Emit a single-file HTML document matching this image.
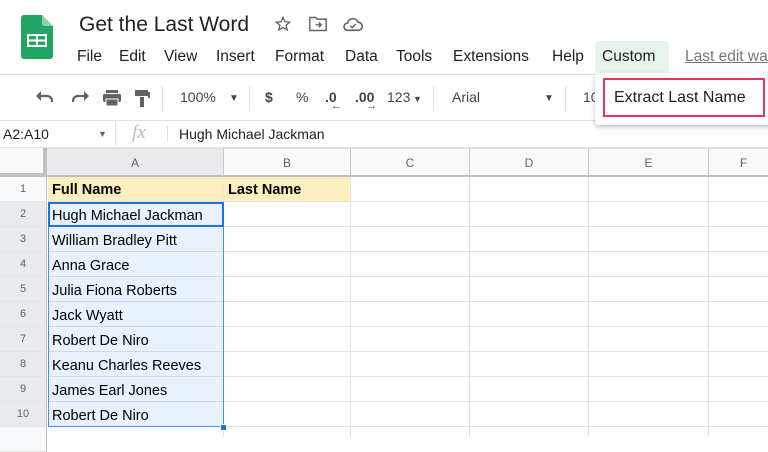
<!DOCTYPE html>
<html><head><meta charset="utf-8"><style>
*{margin:0;padding:0;box-sizing:border-box}
body{width:768px;height:432px;overflow:hidden;background:#fff;font-family:"Liberation Sans",Arial,sans-serif;position:relative;color:#202124}
.a{position:absolute;white-space:nowrap}
.menu{top:48px;font-size:15.5px;color:#202124}
.tb{top:89px;font-size:14px;color:#444}
.cell{position:absolute;font-size:14.5px;color:#000;padding-left:4px;line-height:25px}
.rh{position:absolute;left:0;width:47px;text-align:center;font-size:11px;color:#5f6368;line-height:25px;background:#f8f9fa;border-bottom:1px solid #e2e3e3;border-right:1px solid #c0c0c0}
.ch{position:absolute;top:148px;height:29px;text-align:center;font-size:12px;color:#5f6368;line-height:28px;background:#f8f9fa;border-right:1px solid #c7c7c7;border-bottom:2px solid #c0c0c0;border-top:1px solid #e0e0e0}
</style></head><body>
<svg class="a" style="left:21px;top:15px" width="32" height="44" viewBox="0 0 32 44"><path d="M3 0H21L32 11V41a3 3 0 0 1-3 3H3a3 3 0 0 1-3-3V3a3 3 0 0 1 3-3z" fill="#23a566"/><path d="M21 0L32 11H24a3 3 0 0 1-3-3z" fill="#8ed1b1"/><rect x="6" y="19" width="20" height="13" fill="#fff"/><rect x="8" y="21" width="7" height="3.5" fill="#23a566"/><rect x="17" y="21" width="7" height="3.5" fill="#23a566"/><rect x="8" y="26.5" width="7" height="3.5" fill="#23a566"/><rect x="17" y="26.5" width="7" height="3.5" fill="#23a566"/></svg>
<div class="a" style="left:79px;top:13px;font-size:21px;color:#202124">Get the Last Word</div>
<svg class="a" style="left:274px;top:15px" width="18" height="18" viewBox="0 0 24 24"><path d="M12 3l2.6 6 6.4.5-4.9 4.2 1.5 6.3L12 16.6 6.4 20l1.5-6.3L3 9.5l6.4-.5z" fill="none" stroke="#5f6368" stroke-width="1.8"/></svg>
<svg class="a" style="left:308px;top:15px" width="20" height="18" viewBox="0 0 24 22"><path d="M2 3h7l2 2h11v14H2z" fill="none" stroke="#5f6368" stroke-width="1.8"/><path d="M9 12h7M13 9l3 3-3 3" fill="none" stroke="#5f6368" stroke-width="1.8"/></svg>
<svg class="a" style="left:342px;top:15px" width="22" height="18" viewBox="0 0 24 20"><path d="M6 17a4 4 0 0 1 0-8 6 6 0 0 1 11.5-1A4.5 4.5 0 0 1 18 17z" fill="none" stroke="#5f6368" stroke-width="1.8"/><path d="M9 12l2 2 4-4" fill="none" stroke="#5f6368" stroke-width="1.6"/></svg>
<div class="a" style="left:595px;top:41px;width:74px;height:32px;background:#e6f4ea;border-radius:4px"></div>
<div class="a menu" style="left:77px">File</div>
<div class="a menu" style="left:119px">Edit</div>
<div class="a menu" style="left:164px">View</div>
<div class="a menu" style="left:216px">Insert</div>
<div class="a menu" style="left:275px">Format</div>
<div class="a menu" style="left:345px">Data</div>
<div class="a menu" style="left:396px">Tools</div>
<div class="a menu" style="left:453px">Extensions</div>
<div class="a menu" style="left:552px">Help</div>
<div class="a menu" style="left:602px">Custom</div>
<div class="a menu" style="left:685px;color:#777;text-decoration:underline">Last edit wa</div>
<div class="a" style="left:0;top:74px;width:768px;height:1px;background:#e0e0e0"></div>
<div class="a" style="left:0;top:120px;width:768px;height:1px;background:#e0e0e0"></div>
<div class="a" style="left:0;top:147px;width:768px;height:1px;background:#e0e0e0"></div>
<svg class="a" style="left:34px;top:88px" width="140" height="20" viewBox="0 0 140 20"><path d="M4 8h9a5 5 0 0 1 5 5v1" fill="none" stroke="#5f6368" stroke-width="2.2"/><path d="M2 8l5-5v10z" fill="#5f6368"/><path d="M53 8h-9a5 5 0 0 0-5 5v1" fill="none" stroke="#5f6368" stroke-width="2.2"/><path d="M55 8l-5-5v10z" fill="#5f6368"/><rect x="69" y="6" width="18" height="8" rx="1.5" fill="#5f6368"/><rect x="72" y="2" width="12" height="3" fill="#5f6368"/><rect x="72" y="11" width="12" height="7" fill="#5f6368" stroke="#fff" stroke-width="1"/><rect x="101" y="2" width="13" height="6" fill="#5f6368"/><rect x="114" y="4" width="2" height="6" fill="#5f6368"/><rect x="106" y="9" width="4" height="10" fill="#5f6368"/></svg>
<div class="a" style="left:162px;top:86px;width:1px;height:24px;background:#e0e0e0"></div>
<div class="a tb" style="left:180px">100%</div>
<div class="a tb" style="left:229px;font-size:10px;top:93px">▼</div>
<div class="a" style="left:249px;top:86px;width:1px;height:24px;background:#e0e0e0"></div>
<div class="a tb" style="left:265px;font-weight:bold">$</div>
<div class="a tb" style="left:296px">%</div>
<div class="a tb" style="left:325px;font-weight:bold">.0</div>
<div class="a tb" style="left:331px;top:100px;font-size:11px">←</div>
<div class="a tb" style="left:355px;font-weight:bold">.00</div>
<div class="a tb" style="left:366px;top:100px;font-size:11px">→</div>
<div class="a tb" style="left:387px">123</div>
<div class="a tb" style="left:413px;font-size:9px;top:94px">▼</div>
<div class="a" style="left:433px;top:86px;width:1px;height:24px;background:#e0e0e0"></div>
<div class="a tb" style="left:452px">Arial</div>
<div class="a tb" style="left:544px;font-size:10px;top:93px">▼</div>
<div class="a" style="left:565px;top:86px;width:1px;height:24px;background:#e0e0e0"></div>
<div class="a tb" style="left:583px">10</div>
<div class="a" style="left:595px;top:73px;width:180px;height:52px;background:#fff;box-shadow:0 2px 5px rgba(0,0,0,.25);border-radius:4px"></div>
<div class="a" style="left:603px;top:78px;width:162px;height:39px;border:2px solid #e8345a"></div>
<div class="a" style="left:614px;top:89px;font-size:16px;color:#202124">Extract Last Name</div>
<div class="a" style="left:3px;top:126px;font-size:14px;color:#202124">A2:A10</div>
<div class="a" style="left:98px;top:129px;font-size:9px;color:#5f6368">▼</div>
<div class="a" style="left:115px;top:122px;width:1px;height:24px;background:#e0e0e0"></div>
<div class="a" style="left:132px;top:122px;font-size:19px;color:#bbb;font-family:'Liberation Serif',serif;font-style:italic">fx</div>
<div class="a" style="left:167px;top:126px;width:1px;height:16px;background:#e0e0e0"></div>
<div class="a" style="left:179px;top:126px;font-size:14px;color:#202124">Hugh Michael Jackman</div>
<div class="a" style="left:0;top:148px;width:47px;height:29px;background:#f8f9fa;border-right:4px solid #c0c0c0;border-bottom:4px solid #c0c0c0"></div>
<div class="ch" style="left:47px;width:177px;background:#e8eaed">A</div>
<div class="ch" style="left:224px;width:127px">B</div>
<div class="ch" style="left:351px;width:119px">C</div>
<div class="ch" style="left:470px;width:119px">D</div>
<div class="ch" style="left:589px;width:120px">E</div>
<div class="ch" style="left:709px;width:70px">F</div>
<div class="a" style="left:48px;top:177px;width:720px;height:260px;background:
repeating-linear-gradient(to bottom,transparent 0 24px,#e2e3e3 24px 25px),
linear-gradient(to right,transparent 0 175px,#e2e3e3 175px 176px,transparent 176px 302px,#e2e3e3 302px 303px,transparent 303px 421px,#e2e3e3 421px 422px,transparent 422px 540px,#e2e3e3 540px 541px,transparent 541px 660px,#e2e3e3 660px 661px,transparent 661px)"></div>
<div class="a" style="left:48px;top:177px;width:302px;height:24px;background:#fdebb5;opacity:.85"></div>
<div class="a" style="left:48px;top:202px;width:176px;height:225px;background:rgba(26,115,232,.1);border:1px solid #4a8af4"></div>
<div class="a" style="left:48px;top:202px;width:176px;height:25px;border:2px solid #1a73e8"></div>
<div class="a" style="left:220px;top:424px;width:7px;height:7px;background:#1a73e8;border:1px solid #fff"></div>
<div class="rh" style="top:177px;height:25px;background:#f8f9fa">1</div>
<div class="rh" style="top:202px;height:25px;background:#e8eaed">2</div>
<div class="rh" style="top:227px;height:25px;background:#e8eaed">3</div>
<div class="rh" style="top:252px;height:25px;background:#e8eaed">4</div>
<div class="rh" style="top:277px;height:25px;background:#e8eaed">5</div>
<div class="rh" style="top:302px;height:25px;background:#e8eaed">6</div>
<div class="rh" style="top:327px;height:25px;background:#e8eaed">7</div>
<div class="rh" style="top:352px;height:25px;background:#e8eaed">8</div>
<div class="rh" style="top:377px;height:25px;background:#e8eaed">9</div>
<div class="rh" style="top:402px;height:25px;background:#e8eaed">10</div>
<div class="rh" style="top:427px;height:25px;background:#f8f9fa"></div>
<div class="cell" style="left:48px;top:178px;font-weight:bold">Full Name</div>
<div class="cell" style="left:224px;top:178px;font-weight:bold">Last Name</div>
<div class="cell" style="left:48px;top:204px">Hugh Michael Jackman</div>
<div class="cell" style="left:48px;top:229px">William Bradley Pitt</div>
<div class="cell" style="left:48px;top:254px">Anna Grace</div>
<div class="cell" style="left:48px;top:279px">Julia Fiona Roberts</div>
<div class="cell" style="left:48px;top:304px">Jack Wyatt</div>
<div class="cell" style="left:48px;top:329px">Robert De Niro</div>
<div class="cell" style="left:48px;top:354px">Keanu Charles Reeves</div>
<div class="cell" style="left:48px;top:379px">James Earl Jones</div>
<div class="cell" style="left:48px;top:404px">Robert De Niro</div>
</body></html>
